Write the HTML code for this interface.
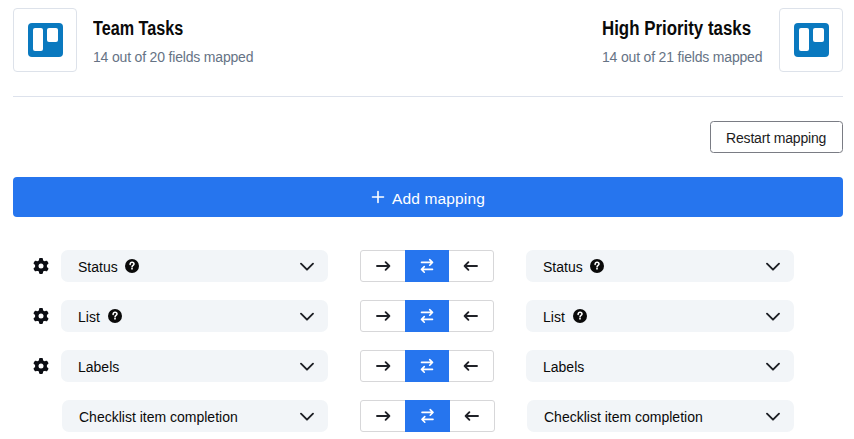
<!DOCTYPE html>
<html><head><meta charset="utf-8">
<style>
*{box-sizing:border-box;margin:0;padding:0}
html,body{width:854px;height:439px;overflow:hidden;background:#fff;font-family:"Liberation Sans",sans-serif;color:#0a0a0a}
.abs{position:absolute;white-space:nowrap;line-height:1}
.logo{position:absolute;width:64px;height:64px;border:1px solid #dde2ea;border-radius:4px;background:#fff}
.trello{position:absolute;left:14px;top:13.5px;width:34.5px;height:34.5px;background:#0a79bf;border-radius:4px}
.trello i{position:absolute;background:#fff;border-radius:2px}
.title{position:absolute;font-weight:bold;font-size:19.5px;line-height:1;white-space:nowrap;transform-origin:0 0}
.sub{position:absolute;font-size:14px;line-height:1;color:#667385;white-space:nowrap;letter-spacing:-0.18px}
.divider{position:absolute;left:13px;top:96px;width:830px;height:1px;background:#dde2ec}
.restart{position:absolute;left:710px;top:121px;width:133px;height:32px;border:1px solid #7a7c84;border-radius:3.5px}
.add{position:absolute;left:13px;top:177px;width:830px;height:40px;background:#2675ee;border-radius:4px}
.sel{position:absolute;height:32px;background:#f2f5f8;border-radius:7px}
.txt{position:absolute;font-size:14px;line-height:1;color:#0a0a0a;white-space:nowrap}
.grp{position:absolute;height:32px;border:1px solid #d7d7d9;border-radius:3px;background:#fff}
.mid{position:absolute;height:32px;background:#2675ee}
svg.ov{position:absolute;left:0;top:0}
</style></head><body>

<div class="logo" style="left:13px;top:8px"><div class="trello"><i style="left:4.6px;top:5.5px;width:10.5px;height:22.7px"></i><i style="left:19px;top:5.5px;width:10.7px;height:14px"></i></div></div>
<div class="title" style="left:93px;top:19px;transform:scaleX(0.83)">Team Tasks</div>
<div class="sub" style="left:93px;top:50px">14 out of 20 fields mapped</div>

<div class="title" style="left:602px;top:19px;transform:scaleX(0.865)">High Priority tasks</div>
<div class="sub" style="left:602px;top:50px">14 out of 21 fields mapped</div>
<div class="logo" style="left:779px;top:8px"><div class="trello"><i style="left:4.6px;top:5.5px;width:10.5px;height:22.7px"></i><i style="left:19px;top:5.5px;width:10.7px;height:14px"></i></div></div>

<div class="divider"></div>

<div class="restart"></div>
<div class="txt" style="left:726px;top:131px;color:#1c1c1c;letter-spacing:-0.17px">Restart mapping</div>

<div class="add"></div>
<div class="abs" style="left:392px;top:191px;font-size:15.5px;letter-spacing:0.15px;color:#fff">Add mapping</div>

<!-- rows -->
<div class="sel" style="left:61px;top:250px;width:267px"></div>
<div class="sel" style="left:61px;top:300px;width:267px"></div>
<div class="sel" style="left:61px;top:350px;width:267px"></div>
<div class="sel" style="left:62px;top:400px;width:266px"></div>

<div class="sel" style="left:526px;top:250px;width:268px"></div>
<div class="sel" style="left:526px;top:300px;width:268px"></div>
<div class="sel" style="left:526px;top:350px;width:268px"></div>
<div class="sel" style="left:527px;top:400px;width:267px"></div>

<div class="grp" style="left:360px;top:250px;width:134px"></div>
<div class="grp" style="left:360px;top:300px;width:134px"></div>
<div class="grp" style="left:360px;top:350px;width:134px"></div>
<div class="grp" style="left:360px;top:400px;width:135px"></div>
<div class="mid" style="left:405px;top:250px;width:44px"></div>
<div class="mid" style="left:405px;top:300px;width:44px"></div>
<div class="mid" style="left:405px;top:350px;width:44px"></div>
<div class="mid" style="left:405px;top:400px;width:45px"></div>

<div class="txt" style="left:78px;top:260px">Status</div>
<div class="txt" style="left:78px;top:310px">List</div>
<div class="txt" style="left:78px;top:360px">Labels</div>
<div class="txt" style="left:79px;top:410px">Checklist item completion</div>

<div class="txt" style="left:543px;top:260px">Status</div>
<div class="txt" style="left:543px;top:310px">List</div>
<div class="txt" style="left:543px;top:360px">Labels</div>
<div class="txt" style="left:544px;top:410px">Checklist item completion</div>

<svg class="ov" width="854" height="439" viewBox="0 0 854 439">
  <defs>
    <g id="gear">
      <circle r="6" fill="#0c0e14"/>
      <rect x="-2" y="-7.9" width="4" height="15.8" rx="1.1" fill="#0c0e14"/>
      <rect x="-2" y="-7.9" width="4" height="15.8" rx="1.1" fill="#0c0e14" transform="rotate(60)"/>
      <rect x="-2" y="-7.9" width="4" height="15.8" rx="1.1" fill="#0c0e14" transform="rotate(120)"/>
      <circle r="2.5" fill="#fff"/>
    </g>
    <g id="q">
      <circle r="7" fill="#0a0a0a"/>
      <path d="M-1.9,-1.5 C-1.9,-3 -1,-3.7 0.05,-3.7 C1.2,-3.7 2,-2.9 2,-1.9 C2,-0.5 0.05,-0.6 0.05,0.9" fill="none" stroke="#fff" stroke-width="1.55" stroke-linecap="round"/>
      <rect x="-0.85" y="2" width="1.7" height="1.5" rx="0.3" fill="#fff"/>
    </g>
    <path id="chev" d="M-6,-3 L0,3 L6,-3" fill="none" stroke="#1c1e23" stroke-width="1.9" stroke-linecap="round" stroke-linejoin="round"/>
    <g id="arr" fill="none" stroke="#202228" stroke-width="1.85" stroke-linecap="round" stroke-linejoin="round">
      <path d="M-6,0 H6.4 M2.6,-3.8 L6.4,0 L2.6,3.8"/>
    </g>
    <g id="swap" fill="none" stroke="#fff" stroke-width="1.6" stroke-linecap="round" stroke-linejoin="round">
      <path d="M-5.5,-3.6 H5.5 M2.7,-6.4 L5.5,-3.6 L2.7,-0.8"/>
      <path d="M5.5,3.4 H-5.5 M-2.7,0.6 L-5.5,3.4 L-2.7,6.2"/>
    </g>
  </defs>
  <use href="#gear" x="41" y="266"/>
  <use href="#gear" x="41" y="316"/>
  <use href="#gear" x="41" y="366"/>

  <use href="#q" x="132" y="266"/>
  <use href="#q" x="115" y="316"/>
  <use href="#q" x="597" y="266"/>
  <use href="#q" x="580" y="316"/>

  <use href="#chev" x="307" y="266.7"/>
  <use href="#chev" x="307" y="316.7"/>
  <use href="#chev" x="307" y="366.7"/>
  <use href="#chev" x="307" y="416.7"/>
  <use href="#chev" x="773" y="266.7"/>
  <use href="#chev" x="773" y="316.7"/>
  <use href="#chev" x="773" y="366.7"/>
  <use href="#chev" x="773" y="416.7"/>

  <use href="#arr" x="383" y="266"/>
  <use href="#arr" x="383" y="316"/>
  <use href="#arr" x="383" y="366"/>
  <use href="#arr" x="383" y="416"/>
  <use href="#arr" transform="translate(471,266) scale(-1,1)"/>
  <use href="#arr" transform="translate(471,316) scale(-1,1)"/>
  <use href="#arr" transform="translate(471,366) scale(-1,1)"/>
  <use href="#arr" transform="translate(472,416) scale(-1,1)"/>

  <use href="#swap" x="427" y="266"/>
  <use href="#swap" x="427" y="316"/>
  <use href="#swap" x="427" y="366"/>
  <use href="#swap" x="427.5" y="416"/>

  <g stroke="#fff" stroke-width="1.6" stroke-linecap="round">
    <path d="M372.5,197 H383.5 M378,191.5 V202.5"/>
  </g>
</svg>

</body></html>
